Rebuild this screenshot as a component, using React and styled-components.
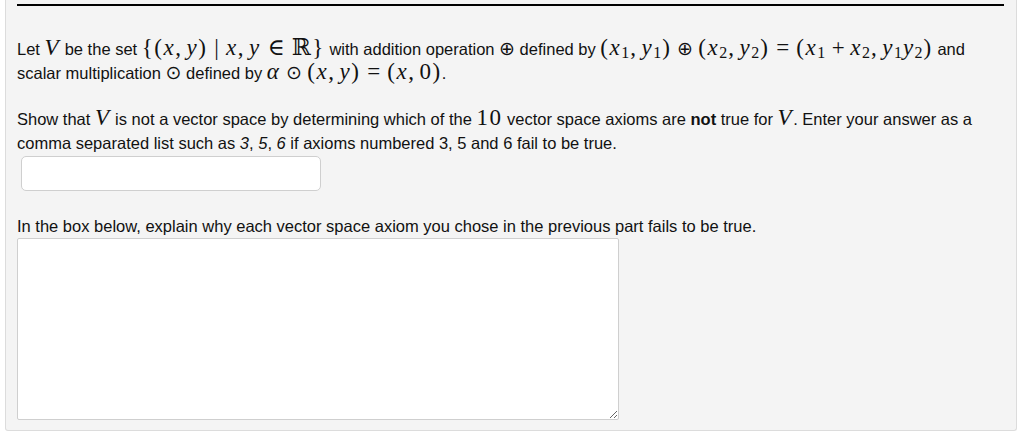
import React from 'react';
import styled, { createGlobalStyle } from 'styled-components';

const GlobalStyle = createGlobalStyle`
  html, body {
    margin: 0;
    padding: 0;
    background: #ffffff;
  }
  body {
    font-family: "Liberation Sans", Arial, sans-serif;
  }
`;

const Page = styled.div`
  width: 1024px;
  height: 438px;
  padding: 0 7px 0 5px;
  box-sizing: border-box;
  overflow: hidden;
`;

const Panel = styled.div`
  background: #f4f4f4;
  border: 1px solid #dcdcdc;
  border-top: none;
  border-radius: 0 0 3px 3px;
  padding: 4px 11px 10px 11px;
  color: #111;
  font-size: 16.5px;
  line-height: 24px;
`;

const Rule = styled.div`
  height: 2px;
  background: #000;
  margin: 0 1px 31px 0;
`;

const Para = styled.div`
  margin: 0 0 ${props => props.gap ?? 22}px 0;
  white-space: nowrap;
`;

const M = styled.span`
  font-family: "Liberation Serif", "DejaVu Serif", serif;
  font-size: 23px;
  line-height: 0;
  letter-spacing: 1.5px;
`;

const V = styled.i`
  font-family: "Liberation Serif", "DejaVu Serif", serif;
  font-style: italic;
`;

const Sub = styled.sub`
  font-size: 16px;
  font-style: normal;
  line-height: 0;
  vertical-align: -3px;
  letter-spacing: 1px;
`;

const Op = styled.span`
  font-family: ${props => (props.circ ? '"DejaVu Sans", sans-serif' : 'inherit')};
  font-size: ${props => (props.circ ? 19 : 23)}px;
  margin: 0 ${props => props.space ?? 5.5}px;
  letter-spacing: 0;
`;

const Comma = styled.span`
  margin-right: 4px;
`;

const AnswerInput = styled.input`
  display: block;
  width: 300px;
  height: 35px;
  box-sizing: border-box;
  margin: 1px 0 24px 4px;
  background: #fff;
  border: 1px solid #cfcfcf;
  border-radius: 5px;
  outline: none;
`;

const AnswerArea = styled.textarea`
  display: block;
  width: 602px;
  height: 182px;
  box-sizing: border-box;
  margin: 0;
  background: #fff;
  border: 1px solid #cfcfcf;
  border-radius: 2px;
  outline: none;
  resize: both;
`;

const Label = styled.div`
  line-height: 22px;
  padding-bottom: 1px;
`;

const sub = (v, n) => (
  <>
    <V>{v}</V>
    <Sub>{n}</Sub>
  </>
);

export default function App() {
  return (
    <Page>
      <GlobalStyle />
      <Panel>
        <Rule />
        <Para gap={22}>
          Let <M><V>V</V></M> be the set{' '}
          <M>
            {'{('}<V>x</V><Comma>,</Comma><V>y</V>{')'}<Op space={7}>|</Op><V>x</V><Comma>,</Comma><V>y</V><Op space={7}>∈</Op>ℝ{'}'}
          </M>{' '}
          with addition operation <M><Op circ space={0}>⊕</Op></M> defined by{' '}
          <M>
            ({sub('x', 1)}<Comma>,</Comma>{sub('y', 1)})<Op circ>⊕</Op>({sub('x', 2)}<Comma>,</Comma>{sub('y', 2)})<Op space={7}>=</Op>
            ({sub('x', 1)}<Op>+</Op>{sub('x', 2)}<Comma>,</Comma>{sub('y', 1)}{sub('y', 2)})
          </M>{' '}
          and
          <br />
          scalar multiplication <M><Op circ space={0}>⊙</Op></M> defined by{' '}
          <M>
            <V>α</V><Op circ>⊙</Op>(<V>x</V><Comma>,</Comma><V>y</V>)<Op space={7}>=</Op>(<V>x</V><Comma>,</Comma>0)
          </M>.
        </Para>
        <Para gap={0}>
          Show that <M><V>V</V></M> is not a vector space by determining which of the <M>10</M> vector space
          axioms are <b>not</b> true for <M><V>V</V></M>. Enter your answer as a
          <br />
          comma separated list such as <i>3</i>, <i>5</i>, <i>6</i> if axioms numbered 3, 5 and 6 fail to be true.
        </Para>
        <AnswerInput type="text" />
        <Label>In the box below, explain why each vector space axiom you chose in the previous part fails to be true.</Label>
        <AnswerArea />
      </Panel>
    </Page>
  );
}
